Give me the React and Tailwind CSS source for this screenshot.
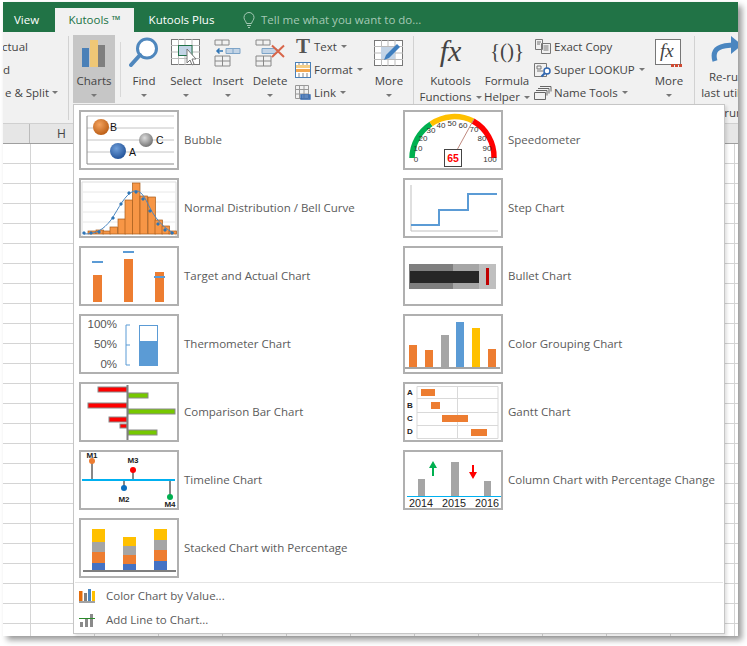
import React from 'react';

const F = { fontFamily: '"Open Sans","Noto Sans",sans-serif' };

function Caret({ className = '' }) {
  return <span className={`inline-block w-0 h-0 border-l-[3px] border-r-[3px] border-t-[3px] border-l-transparent border-r-transparent border-t-[#777] ${className}`} />;
}

function BigBtn({ icon, label, label2, label3, caret = true, w, active }) {
  return (
    <div className="shrink-0 pt-[3px]" style={{ width: w }}>
      <div className={`flex flex-col items-center h-[68px] ${active ? 'bg-[#c6c6c6]' : ''}`}>
        <div className="h-[32px] flex items-end justify-center">{icon}</div>
        <div className="text-[11.5px] leading-[16px] text-[#444] mt-[6px] whitespace-nowrap text-center">{label}</div>
        {label2 ? <div className="text-[11.5px] leading-[16px] text-[#444] whitespace-nowrap flex items-center gap-1">{label2}{caret && <Caret />}</div>
          : caret && <Caret className="mt-[5px]" />}
        {label3 && <div className="text-[11.5px] leading-[16px] text-[#444] mt-[4px] whitespace-nowrap">{label3}</div>}
      </div>
    </div>
  );
}

function SmallBtn({ icon, label, caret }) {
  return (
    <div className="flex items-center h-[23px] gap-[2px] whitespace-nowrap text-[11.5px] text-[#444]">
      <span className="w-[18px] flex justify-center shrink-0">{icon}</span>
      <span>{label}</span>
      {caret && <Caret className="ml-[2px]" />}
    </div>
  );
}

const Sep = () => <div className="w-px h-[84px] mt-[4px] bg-[#d2d2d2] shrink-0" />;

const ChartsIcon = (
  <svg width="25" height="27" viewBox="0 0 25 27"><rect x="0" y="8" width="7" height="19" fill="#4a80b8" /><rect x="8" y="0" width="8" height="27" fill="#efc776" /><rect x="16" y="5" width="7" height="22" fill="#7f7f7f" /></svg>
);
const FindIcon = (
  <svg width="30" height="30" viewBox="0 0 30 30"><circle cx="18" cy="11.5" r="9.5" fill="#fff" stroke="#4f87bd" strokeWidth="3" /><path d="M11 18 L2 28" stroke="#4f87bd" strokeWidth="4" strokeLinecap="round" /></svg>
);
const SelectIcon = (
  <svg width="30" height="28" viewBox="0 0 30 28"><rect x="0.5" y="0.5" width="28" height="25" fill="#fff" stroke="#777" /><path d="M7.5 0v26M14 0v26M21 0v26M0 6.5h29M0 13h29M0 19.5h29" stroke="#bbb" /><rect x="7.5" y="6.5" width="13.5" height="10" fill="#c3d4e6" stroke="#22734a" /><path d="M16 10v14l3-3 2 5 2-1-2-5 4 0z" fill="#fff" stroke="#777" /></svg>
);
const InsertIcon = (
  <svg width="28" height="28" viewBox="0 0 28 28" fill="none"><path d="M1 1h14v5H1zM8 1v5M1 17h15v10H1zM1 22h15M8.5 17v10" stroke="#888" /><path d="M12 9.500h14v5H12zM19 9.500v5" stroke="#7da4c8" fill="#c3d4e6" /><path d="M9 12H3M5.500 9.500 3 12l2.500 2.500" stroke="#2f75b5" strokeWidth="1.500" /></svg>
);
const DeleteIcon = (
  <svg width="31" height="28" viewBox="0 0 31 28" fill="none"><path d="M1 1h14v5H1zM8 1v5M1 17h15v10H1zM1 22h15M8.500 17v10" stroke="#888" /><path d="M7 9.500h14l3 2.500-3 2.500H7z" fill="#c3d4e6" stroke="#7da4c8" /><path d="M17 6.500 29 18M29 6.500 17 18" stroke="#d8664a" strokeWidth="2" /></svg>
);
const MoreIcon = (
  <svg width="30" height="27" viewBox="0 0 30 27"><rect x="0.5" y="0.500" width="28" height="25" fill="#fff" stroke="#777" /><path d="M7.500 0v26M14 0v26M21 0v26M0 6.500h29M0 13h29M0 19.500h29" stroke="#bbb" /><rect x="7" y="7" width="14" height="12" fill="#c3d4e6" /><path d="M10 20l2-5L23 4l3 3-11 11z" fill="#3f7fbf" /></svg>
);
const TextIcon = <span className="text-[21px] leading-none font-bold text-[#555]" style={{ fontFamily: '"Liberation Serif",serif' }}>T</span>;
const FormatIcon = (
  <svg width="16" height="16" viewBox="0 0 16 16"><rect x="0.500" y="0.500" width="15" height="15" fill="#fff" stroke="#4a80b8" /><rect x="1" y="3" width="14" height="3" fill="#f5ce85" /><rect x="1" y="7" width="14" height="3" fill="#f3a64d" /><path d="M4 1v2M8 1v2M12 1v2M4 11v4M8 11v4M12 11v4" stroke="#888" /></svg>
);
const LinkIcon = (
  <svg width="17" height="16" viewBox="0 0 17 16" fill="none"><path d="M.5.500h13v13H.5zM4.500.500v13M9 .5v13M.5 4.500h13M.5 9h13" stroke="#999" /><path d="M6 10h9v4H6zM6 12h9" stroke="#2f66b0" strokeWidth="1.300" /></svg>
);
const CopyIcon = (
  <svg width="16" height="15" viewBox="0 0 16 15" fill="none"><path d="M.5.500h7v10h-7zM6.500 4.500h9v10h-9zM8.500 7h5M8.500 9h5M8.500 11h5M2 3h4M2 5h3" stroke="#777" /></svg>
);
const LookupIcon = (
  <svg width="18" height="17" viewBox="0 0 18 17" fill="none"><path d="M.5 2.500h12v13H.5zM3 5h4v3H3zM3 10h6" stroke="#777" /><circle cx="13" cy="10" r="3" fill="#fff" stroke="#2f66b0" strokeWidth="1.500" /><path d="M10.500 12.500 7.500 15.500" stroke="#2f66b0" strokeWidth="2" /></svg>
);
const NameIcon = (
  <svg width="18" height="15" viewBox="0 0 18 15" fill="none"><path d="M.5 7.500h11v7H.5zM2 5.500h11M4 3.500h11M6 1.500h11M13 5.500v5M15 3.500v5M17 1.500v5" stroke="#666" /></svg>
);
const FxBox = (
  <svg width="28" height="28" viewBox="0 0 28 28"><rect x="0.500" y="0.500" width="25" height="25" fill="#fff" stroke="#777" /><rect x="16" y="25" width="3" height="3" fill="#d04a32" /><rect x="20" y="25" width="3" height="3" fill="#d04a32" /><rect x="24" y="25" width="3" height="3" fill="#d04a32" /></svg>
);
const RerunIcon = (
  <svg width="32" height="28" viewBox="0 0 32 28" fill="none"><path d="M4 26 C0 13 10 10 25 10" stroke="#4a86c0" strokeWidth="5" /><path d="M20 1 L31 10 L20 19z" fill="#4a86c0" /></svg>
);

function Ribbon() {
  return (
    <div className="relative h-[91px] bg-[#f1f1f1] flex overflow-hidden text-[#444]" >
      <div className="w-[65px] shrink-0 relative overflow-hidden">
        <div className="flex flex-col pt-[3px] text-[11.5px] leading-[23px] text-[#444] whitespace-nowrap">
          <div className="-ml-[1px]">ctual</div>
          <div>d</div>
          <div className="flex items-center gap-[3px] absolute right-[10px] top-[49px]">e &amp; Split<Caret /></div>
        </div>
      </div>
      <Sep />
      <div className="w-[4px] shrink-0" />
      <BigBtn w={42} active icon={ChartsIcon} label="Charts" />
      <div className="w-[5px] shrink-0" />
      <div className="w-px h-[55px] mt-[10px] bg-[#d8d8d8] shrink-0" />
      <div className="w-[2px] shrink-0" />
      <BigBtn w={42} icon={FindIcon} label="Find" />
      <BigBtn w={42} icon={SelectIcon} label="Select" />
      <BigBtn w={42} icon={InsertIcon} label="Insert" />
      <BigBtn w={42} icon={DeleteIcon} label="Delete" />
      <div className="flex flex-col shrink-0 w-[81px] pt-[3px] pl-[3px]">
        <SmallBtn icon={TextIcon} label="Text" caret />
        <SmallBtn icon={FormatIcon} label="Format" caret />
        <SmallBtn icon={LinkIcon} label="Link" caret />
      </div>
      <BigBtn w={34} icon={MoreIcon} label="More" />
      <div className="w-[7px] shrink-0" />
      <Sep />
      <div className="w-[3px] shrink-0" />
      <BigBtn w={67} label="Kutools" label2="Functions" icon={<span className="text-[30px] leading-[32px] italic text-[#444]" style={{ fontFamily: '"Liberation Serif",serif' }}>fx</span>} />
      <BigBtn w={46} label="Formula" label2="Helper" icon={<span className="text-[21px] leading-[32px] text-[#444]" style={{ fontFamily: '"Liberation Serif",serif' }}>{'{()}'}</span>} />
      <div className="flex flex-col shrink-0 w-[120px] pt-[3px] pl-[4px]">
        <SmallBtn icon={CopyIcon} label="Exact Copy" />
        <SmallBtn icon={LookupIcon} label="Super LOOKUP" caret />
        <SmallBtn icon={NameIcon} label="Name Tools" caret />
      </div>
      <div className="relative shrink-0">
        <BigBtn w={38} icon={FxBox} label="More" />
        <span className="absolute left-[10px] top-[7px] text-[19px] leading-[24px] italic text-[#444]" style={{ fontFamily: '"Liberation Serif",serif' }}>fx</span>
      </div>
      <div className="w-[6px] shrink-0" />
      <Sep />
      <div className="w-[2px] shrink-0" />
      <BigBtn w={60} caret={false} icon={RerunIcon} label="Re-run" label2="last utility" label3="Rerun" />
    </div>
  );
}

/* ---------- chart thumbnails ---------- */
function Thumb({ children }) {
  return (
    <div className="w-[100px] h-[60px] shrink-0 border-2 border-[#b0b0b0] bg-white overflow-hidden">
      <svg width="96" height="56" viewBox="0 0 96 56" className="block" style={{ fontFamily: '"Liberation Sans",sans-serif' }}>{children}</svg>
    </div>
  );
}

const Ball = ({ cx, cy, r, c1, c2, id }) => (
  <>
    <defs><radialGradient id={id} cx="0.4" cy="0.35" r="0.7"><stop offset="0" stopColor={c1} /><stop offset="1" stopColor={c2} /></radialGradient></defs>
    <circle cx={cx} cy={cy} r={r} fill={`url(#${id})`} />
  </>
);

const Bubble = (
  <Thumb>
    <path d="M6 4h87M6 16h87M6 28h87M6 40h87" stroke="#c4c4c4" />
    <path d="M6 4v48h87" stroke="#8a8a8a" fill="none" />
    <Ball id="b1" cx="20" cy="15" r="8" c1="#f4a35f" c2="#b85a12" />
    <Ball id="b2" cx="65" cy="28" r="7" c1="#dcdcdc" c2="#6d6d6d" />
    <Ball id="b3" cx="37" cy="39" r="8" c1="#6f9fda" c2="#1f4f96" />
    <text x="29" y="19" fontSize="10.500" fill="#111">B</text>
    <text x="75" y="32" fontSize="10.500" fill="#111">C</text>
    <text x="48" y="44" fontSize="10.500" fill="#111">A</text>
  </Thumb>
);

const Normal = (
  <Thumb>
    <path d="M1 2h94v54M1 2v54" stroke="#ddd" fill="none" />
    <path d="M2 12h92M2 22h92M2 32h92M2 42h92" stroke="#e8e8e8" />
    {[[7, 3], [15, 4], [22, 3], [29, 7], [37, 15], [44, 34], [51.500, 51], [59, 38], [67, 37], [74, 14], [81, 8], [88, 3]].map(([x, h], i) => (
      <rect key={i} x={x} y={54 - h} width="7.500" height={h} fill="#f79646" stroke="#a65c1a" strokeWidth="0.700" />
    ))}
    <path d="M3 54 C15 54 22 50 30 40 C38 28 44 14 53 11 C60 9 64 18 69 28 C75 40 85 50 93 53" stroke="#4a86c0" fill="none" />
    {[[3, 53], [10, 53], [18, 52], [32, 38], [40, 24], [48, 13], [55, 12], [62, 19], [69, 31], [77, 44], [84, 50], [91, 53]].map(([x, y], i) => (
      <path key={i} d={`M${x} ${y - 2}l2 2-2 2-2-2z`} fill="#2f75b5" />
    ))}
  </Thumb>
);

const Target = (
  <Thumb>
    <rect x="12" y="27" width="9" height="27" fill="#ed7d31" />
    <rect x="43" y="11" width="9" height="43" fill="#ed7d31" />
    <rect x="74" y="24" width="9" height="30" fill="#ed7d31" />
    <path d="M11 14h11M42 4h11M73 29h11" stroke="#5b9bd5" strokeWidth="2" />
  </Thumb>
);

const Thermo = (
  <Thumb>
    <text x="36" y="12" fontSize="11.500" textAnchor="end" fill="#555">100%</text>
    <text x="36" y="32" fontSize="11.500" textAnchor="end" fill="#555">50%</text>
    <text x="36" y="52" fontSize="11.500" textAnchor="end" fill="#555">0%</text>
    <path d="M49 9h-4v40h4M45 29h4" stroke="#5b9bd5" fill="none" />
    <rect x="58.500" y="9.500" width="18" height="40" fill="#fff" stroke="#5b9bd5" />
    <rect x="58" y="25" width="19" height="25" fill="#5b9bd5" />
  </Thumb>
);

const Comparison = (
  <Thumb>
    {[[17, 3, 29, 5], [7, 19, 39, 5], [28, 33, 18, 5], [39, 40, 7, 4]].map(([x, y, w, h], i) => (
      <rect key={i} x={x} y={y} width={w} height={h} fill="#ff0000" stroke="#8a8a8a" />
    ))}
    {[[47, 9, 20, 5], [47, 25, 47, 5], [47, 46, 29, 5]].map(([x, y, w, h], i) => (
      <rect key={i} x={x} y={y} width={w} height={h} fill="#76c800" stroke="#8a8a8a" />
    ))}
    <rect x="45.500" y="1" width="2" height="55" fill="#7f7f7f" />
  </Thumb>
);

const Lbl = ({ x, y, t, s = 8, a = 'middle', c = '#222', w = 'bold' }) => (
  <text x={x} y={y} fontSize={s} textAnchor={a} fill={c} fontWeight={w}>{t}</text>
);

const Timeline = (
  <Thumb>
    <path d="M11 9v19M52 18v10M43 28v8M89 28v17" stroke="#111" />
    <path d="M1 28h93" stroke="#00b0f0" strokeWidth="2" />
    <circle cx="11" cy="9" r="3" fill="#ed7d31" />
    <circle cx="52" cy="18" r="3" fill="#ff0000" />
    <circle cx="43" cy="36" r="3" fill="#0a6fc0" />
    <circle cx="89" cy="45" r="3" fill="#00b050" />
    <Lbl x="11" y="6" t="M1" />
    <Lbl x="52" y="11" t="M3" />
    <Lbl x="43" y="50" t="M2" />
    <Lbl x="89" y="55" t="M4" />
  </Thumb>
);

const Stacked = (
  <Thumb>
    {[[11, 9, [[13, '#ffc000'], [10, '#a5a5a5'], [11, '#ed7d31'], [7, '#4472c4']]], [42, 17, [[9, '#ffc000'], [9, '#a5a5a5'], [9, '#ed7d31'], [6, '#4472c4']]], [73, 9, [[11, '#ffc000'], [10, '#a5a5a5'], [11, '#ed7d31'], [9, '#4472c4']]]].map(([x, top, segs], i) => {
      let y = top;
      return segs.map(([h, c], j) => {
        const r = <rect key={`${i}${j}`} x={x} y={y} width="13" height={h} fill={c} />;
        y += h;
        return r;
      });
    })}
    <rect x="2" y="50" width="93" height="2" fill="#7f7f7f" />
  </Thumb>
);

const Speedometer = (
  <Thumb>
    <path d="M7 46 A41 41 0 0 1 26 12" stroke="#00b050" strokeWidth="5.500" fill="none" />
    <path d="M26 12 A41 41 0 0 1 68 9" stroke="#ffc000" strokeWidth="5.500" fill="none" />
    <path d="M68 9 A41 41 0 0 1 89 46" stroke="#ff0000" strokeWidth="5.500" fill="none" />
    <path d="M52 38 L69 7" stroke="#c08a80" />
    {[[11, 50, '0'], [13, 39, '10'], [18, 29, '20'], [26, 21, '30'], [36, 16, '40'], [47, 14, '50'], [58, 16, '60'], [69, 20, '70'], [77, 29, '80'], [82, 39, '90'], [85, 50, '100']].map(([x, y, t]) => (
      <text key={t} x={x} y={y} fontSize="8" textAnchor="middle" fill="#333">{t}</text>
    ))}
    <rect x="39.500" y="37.500" width="17" height="17" fill="#fff" stroke="#444" />
    <text x="48" y="50" fontSize="10.500" fontWeight="bold" textAnchor="middle" fill="#ff0000">65</text>
  </Thumb>
);

const Step = (
  <Thumb>
    <path d="M6 5v46h87" stroke="#bfbfbf" fill="none" />
    <path d="M6 45h28V30h29V14h29" stroke="#5b9bd5" strokeWidth="2" fill="none" />
  </Thumb>
);

const Bullet = (
  <Thumb>
    <rect x="4" y="16" width="44" height="25" fill="#7f7f7f" />
    <rect x="48" y="16" width="26" height="25" fill="#a6a6a6" />
    <rect x="74" y="16" width="17" height="25" fill="#bfbfbf" />
    <rect x="5" y="23" width="69" height="12" fill="#262626" />
    <rect x="81" y="20" width="3" height="17" fill="#c00000" />
  </Thumb>
);

const ColorGroup = (
  <Thumb>
    <rect x="4" y="29" width="8" height="22" fill="#ed7d31" />
    <rect x="20" y="34" width="8" height="17" fill="#ed7d31" />
    <rect x="36" y="19" width="8" height="32" fill="#a5a5a5" />
    <rect x="51" y="6" width="8" height="45" fill="#5b9bd5" />
    <rect x="67" y="12" width="8" height="39" fill="#ffc000" />
    <rect x="83" y="33" width="8" height="18" fill="#ed7d31" />
    <rect x="0" y="51" width="95" height="2" fill="#a5a5a5" />
  </Thumb>
);

const Gantt = (
  <Thumb>
    <path d="M12 2.500h81v52H12zM12 14.500h81M12 28.500h81M12 41.500h81M52.500 3v52" stroke="#d9d9d9" fill="none" />
    <rect x="16" y="5" width="14" height="7" fill="#ed7d31" />
    <rect x="26" y="18" width="9" height="7" fill="#ed7d31" />
    <rect x="37" y="31" width="26" height="7" fill="#ed7d31" />
    <rect x="66" y="45" width="16" height="7" fill="#ed7d31" />
    <Lbl x="5" y="11" s={8} t="A" />
    <Lbl x="5" y="24" s={8} t="B" />
    <Lbl x="5" y="37" s={8} t="C" />
    <Lbl x="5" y="50" s={8} t="D" />
  </Thumb>
);

const ColumnChange = (
  <Thumb>
    <rect x="13" y="27" width="7" height="17" fill="#a5a5a5" />
    <rect x="46" y="10" width="8" height="34" fill="#a5a5a5" />
    <rect x="79" y="29" width="7" height="15" fill="#a5a5a5" />
    <path d="M28 9l-4 7h3v8h2v-8h3z" fill="#00b050" />
    <path d="M68 27l-4-7h3v-7h2v7h3z" fill="#ff0000" />
    <path d="M2 44.500h94" stroke="#00b0f0" />
    <Lbl x="16" y="55" s={10.8} t="2014" c="#222" w="normal" />
    <Lbl x="49" y="55" s={10.8} t="2015" c="#222" w="normal" />
    <Lbl x="82" y="55" s={10.8} t="2016" c="#222" w="normal" />
  </Thumb>
);

function Item({ thumb, label }) {
  return (
    <div className="flex items-center h-[60px] gap-[5px]">
      {thumb}
      <span className="text-[11.5px] text-[#5b5b5b] whitespace-nowrap">{label}</span>
    </div>
  );
}

const left = [[Bubble, 'Bubble'], [Normal, 'Normal Distribution / Bell Curve'], [Target, 'Target and Actual Chart'], [Thermo, 'Thermometer Chart'], [Comparison, 'Comparison Bar Chart'], [Timeline, 'Timeline Chart'], [Stacked, 'Stacked Chart with Percentage']];
const right = [[Speedometer, 'Speedometer'], [Step, 'Step Chart'], [Bullet, 'Bullet Chart'], [ColorGroup, 'Color Grouping Chart'], [Gantt, 'Gantt Chart'], [ColumnChange, 'Column Chart with Percentage Change']];

function Menu() {
  return (
    <div className="absolute left-[73px] top-[104px] w-[652px] h-[530px] bg-white border border-[#c6c6c6] z-10 shadow-[2px_2px_3px_rgba(0,0,0,0.12)]">
      <div className="flex pl-[5px] pt-[5px] h-[477px]">
        <div className="w-[324px] flex flex-col gap-[8px]">
          {left.map(([t, l]) => <Item key={l} thumb={t} label={l} />)}
        </div>
        <div className="flex flex-col gap-[8px]">
          {right.map(([t, l]) => <Item key={l} thumb={t} label={l} />)}
        </div>
      </div>
      <div className="h-px bg-[#e4e4e4] mx-[1px]" />
      <div className="flex items-center h-[25px] pl-[5px] text-[11.5px] text-[#5b5b5b]">
        <svg width="17" height="14" viewBox="0 0 17 14" className="mr-[10px]"><rect x="0" y="2" width="3.500" height="10" fill="#e46c0a" /><rect x="5" y="4" width="3" height="8" fill="#7f7f7f" /><rect x="9" y="0" width="3" height="12" fill="#4a86c0" /><rect x="13" y="2" width="3" height="10" fill="#ffc000" /><path d="M0 13h16" stroke="#444" /></svg>
        Color Chart by Value...
      </div>
      <div className="flex items-center h-[24px] pl-[5px] text-[11.5px] text-[#5b5b5b]">
        <svg width="17" height="15" viewBox="0 0 17 15" className="mr-[10px]"><rect x="1" y="9" width="3" height="5" fill="#8a8a8a" /><rect x="6" y="5" width="3" height="9" fill="#8a8a8a" /><rect x="11" y="1" width="3" height="13" fill="#8a8a8a" /><path d="M0 5.500h16" stroke="#2b8a2b" /></svg>
        Add Line to Chart...
      </div>
    </div>
  );
}

export default function App() {
  return (
    <div className="w-[747px] h-[646px] bg-white overflow-hidden relative" style={F}>
      <div className="absolute left-[3px] top-[2px] w-[735px] h-[634px] shadow-[4px_4px_6px_rgba(0,0,0,0.4)]" />
      <div className="relative ml-[3px] mt-[2px] w-[735px] h-[634px] flex flex-col bg-white overflow-hidden">
        <div className="h-[30px] bg-[#217346] flex items-end text-[11.5px] text-white shrink-0">
          <div className="w-[52px] h-[24px] flex items-center justify-center pr-[5px]">View</div>
          <div className="w-[79px] h-[24px] bg-[#f1f1f1] text-[#217346] flex items-center justify-center">Kutools ™</div>
          <div className="w-[95px] h-[24px] flex items-center justify-center">Kutools Plus</div>
          <div className="h-[24px] flex items-center gap-[6px] ml-[14px] text-[#a5c9b5]">
            <svg width="12" height="16" viewBox="0 0 12 16" fill="none" stroke="#a5c9b5"><path d="M3.500 11.500C3 9 1 8 1 5.500a5 5 0 0 1 10 0C11 8 9 9 8.500 11.500zM4 13.500h4M5 15.500h2" /></svg>
            Tell me what you want to do...
          </div>
        </div>
        <Ribbon />
        <div className="h-px bg-[#d0d0d0] shrink-0" />
        <div className="h-[20px] bg-[#e6e6e6] border-b border-[#9f9f9f] flex text-[12px] text-[#444] shrink-0">
          <div className="w-[27px] border-r border-[#bbb]" />
          <div className="w-[64px] border-r border-[#bbb] flex items-center justify-center text-[12px]">H</div>
        </div>
        <div className="flex-1 bg-white bg-[linear-gradient(#d4d4d4_1px,transparent_1px),linear-gradient(90deg,#d4d4d4_1px,transparent_1px)] bg-[size:64px_20px] bg-[position:27px_19px]" />
      </div>
      <Menu />
    </div>
  );
}
